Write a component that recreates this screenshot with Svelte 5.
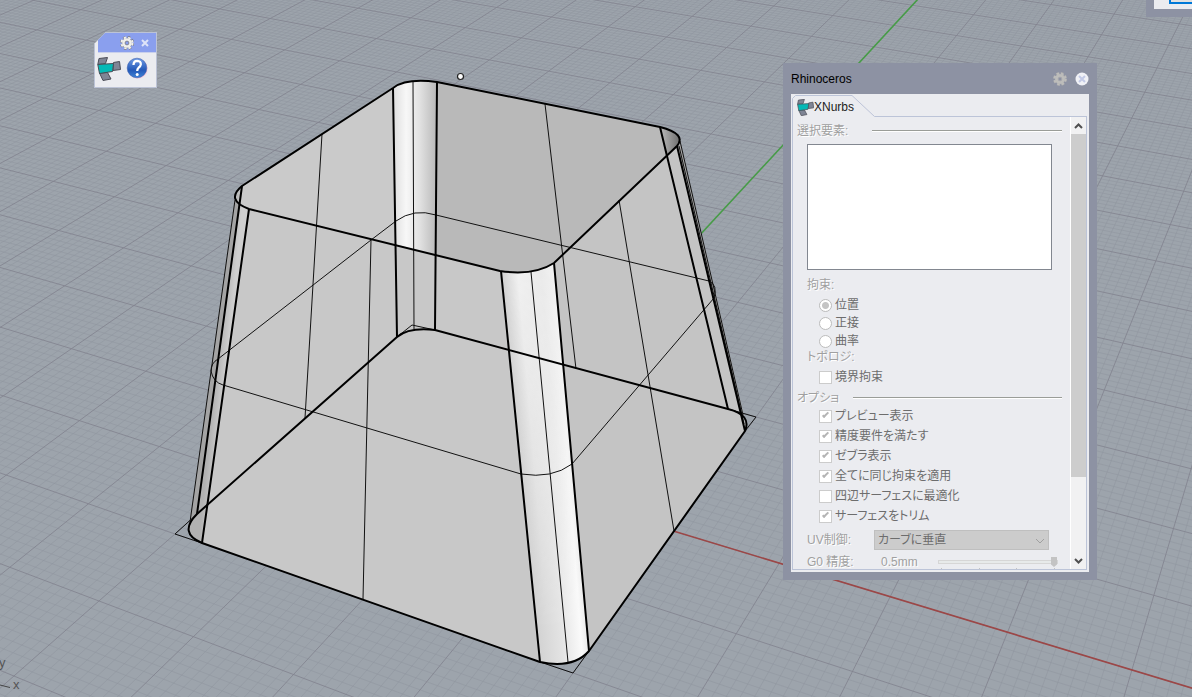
<script lang="ts">
  type Point = [number, number];

  interface Option {
    label: string;
    checked: boolean;
  }

  let constraint: string = $state("位置");
  const constraints: string[] = ["位置", "正接", "曲率"];

  let boundary: boolean = $state(false);

  let options: Option[] = $state([
    { label: "プレビュー表示", checked: true },
    { label: "精度要件を満たす", checked: true },
    { label: "ゼブラ表示", checked: true },
    { label: "全てに同じ拘束を適用", checked: true },
    { label: "四辺サーフェスに最適化", checked: false },
    { label: "サーフェスをトリム", checked: true },
  ]);

  let precision: number = $state(100);

  // Project a point of the construction plane to the viewport
  function project(u: number, v: number): Point {
    const w = 1 - 0.10677 * u + 0.21377 * v;
    return [
      (336.82 * u + 325.07 * v + 175) / w,
      (67.14 * u - 139.52 * v + 534) / w,
    ];
  }

  function segment(a: Point, b: Point) {
    return `M${a[0].toFixed(1)} ${a[1].toFixed(1)}L${b[0].toFixed(1)} ${b[1].toFixed(1)}`;
  }

  // Grid lines, ten minor steps for each major one
  function gridPath(major: boolean) {
    let d = "";
    for (let i = -120; i <= 100; i++) {
      if ((i % 10 === 0) === major) d += segment(project(i / 40, -1), project(i / 40, 5));
    }
    for (let i = -40; i <= 200; i++) {
      if ((i % 10 === 0) === major) d += segment(project(-3, i / 40), project(2.5, i / 40));
    }
    return d;
  }

  const minorGrid = gridPath(false);
  const majorGrid = gridPath(true);
  const xAxis = segment(project(0.5, 0.5), project(2.5, 0.5));
  const yAxis = segment(project(0.5, 0.5), project(0.5, 5));
</script>

{#snippet surfaceIcon(size: number)}
  <svg width={size} height={size} viewBox="0 0 24 24" aria-hidden="true">
    <g stroke="#4b4d57" stroke-width="1">
      <path d="M2 1.500L10.500 .5L8.500 6.500L.8 7.500Z" fill="#7f8595" />
      <path d="M2.500 16L10.500 15.500L14 22L6 23.500Z" fill="#7f8595" />
      <path d="M16.500 5.500L22.500 4.500L23.500 12.500L16 13.500Z" fill="#7f8595" />
      <path d="M.8 7.500L16.500 6.500L15.500 14.500L2.500 16.500Z" fill="#05b9b6" />
    </g>
  </svg>
{/snippet}

{#snippet gearIcon(body: string, hole: string, edge: string)}
  <svg width="14" height="14" viewBox="0 0 14 14" aria-hidden="true">
    <circle cx="7" cy="7" r="5.600" fill="none" stroke={edge} stroke-width="2.800" stroke-dasharray="2.500 1.900" />
    <circle cx="7" cy="7" r="5.200" fill={edge} />
    <circle cx="7" cy="7" r="5.500" fill="none" stroke={body} stroke-width="2" stroke-dasharray="2.500 1.900" />
    <circle cx="7" cy="7" r="4.800" fill={body} />
    <circle cx="7" cy="7" r="1.900" fill={hole} stroke={edge} stroke-width=".8" />
  </svg>
{/snippet}

<main class="workspace">
  <!-- Perspective viewport -->
  <svg class="viewport" viewBox="0 0 1192 697" preserveAspectRatio="xMinYMin slice" role="img" aria-label="Perspective">
    <defs>
      <linearGradient id="backCorner">
        <stop offset="0" stop-color="#dedede" />
        <stop offset=".3" stop-color="#f7f7f7" />
        <stop offset=".6" stop-color="#e2e2e2" />
        <stop offset="1" stop-color="#b8b8b8" />
      </linearGradient>
      <linearGradient id="frontCorner" gradientUnits="userSpaceOnUse" x1="500" y1="271" x2="558" y2="266">
        <stop offset="0" stop-color="#cfcfcf" />
        <stop offset=".3" stop-color="#f2f2f2" />
        <stop offset=".7" stop-color="#ebebeb" />
        <stop offset="1" stop-color="#f3f3f3" />
      </linearGradient>
      <linearGradient id="frontCornerLow" gradientUnits="userSpaceOnUse" x1="532" y1="600" x2="586" y2="596">
        <stop offset="0" stop-color="#d0d0d0" />
        <stop offset=".5" stop-color="#e4e4e4" />
        <stop offset=".85" stop-color="#fafafa" />
        <stop offset="1" stop-color="#e6e6e6" />
      </linearGradient>
      <linearGradient id="fade" x1="0" y1="0" x2="0" y2="1">
        <stop offset="0" stop-color="#000" />
        <stop offset=".9" stop-color="#fff" />
      </linearGradient>
      <mask id="lowMask">
        <rect x="480" y="260" width="130" height="410" fill="url(#fade)" />
      </mask>
      <linearGradient id="rightCorner">
        <stop offset="0" stop-color="#bcbcbc" />
        <stop offset="1" stop-color="#6f6f6f" />
      </linearGradient>
      <linearGradient id="leftInner">
        <stop offset="0" stop-color="#b5b5b5" />
        <stop offset="1" stop-color="#cacaca" />
      </linearGradient>
      <linearGradient id="leftCorner" gradientUnits="userSpaceOnUse" x1="217" y1="360" x2="227" y2="361">
        <stop offset="0" stop-color="#b2b2b2" />
        <stop offset="1" stop-color="#cfcfcf" />
      </linearGradient>
    </defs>

    <path class="minor" d={minorGrid} />
    <path class="major" d={majorGrid} />
    <path class="x-axis" d={xAxis} />
    <path class="y-axis" d={yAxis} />

    <!-- Shaded walls -->
    <path fill="#cacaca" d="M242 186L393 87L397 246L249 209Q230 200 242 186Z" />
    <path fill="#b9b9b9" d="M436 82L660 127L666 157L554 263Q532 276 500 271L436 255Z" />
    <path fill="url(#backCorner)" d="M393 87Q410 78 437 82L436 256L396 246Z" />
    <path fill="url(#rightCorner)" d="M660 127Q685 135 678 146L666 157Z" />
    <path fill="url(#leftInner)" d="M242 186Q230 199 241 206Z" />
    <path fill="#c8c8c8" d="M249 209L500 271L540 662L202 543Z" />
    <path fill="#c4c4c4" d="M554 263L677 146L745 431L589 651Z" />
    <path fill="#a4a4a4" d="M235 198Q236 203 240 205L197 514L190 520Z" />
    <path fill="url(#leftCorner)" d="M240 205L249 209L202 543Q188 537 188 528Q189 520 197 514Z" />
    <path fill="#a9a9a9" d="M677 146L680 141L744 416Q749 422 745 431Z" />
    <path fill="url(#frontCorner)" d="M500 271Q535 276 554 263L589 651Q575 669 540 662Z" />
    <path fill="url(#frontCornerLow)" mask="url(#lowMask)" d="M500 271Q535 276 554 263L589 651Q575 669 540 662Z" />

    <!-- Isocurves and silhouettes -->
    <g class="thin">
      <path d="M322 134L305 418M371 240L363 599M545 104L576 369M619 200L674 531" />
      <path d="M413 81L414 329M531 272L568 662" />
      <path d="M235 200L190 522M680 141L743 415M679 146L744 424" />
      <path d="M371 240L218 359Q211 363 211 371Q213 382 223 385L521 474Q552 479 572 464L714 298Q718 285 709 281L436 215Q414 208 396 221Z" />
      <path d="M197 514L175 534L202 543M540 662L573 673L589 651M728 409L756 417L745 431M397 337L412 325L435 330" />
    </g>

    <!-- Edges -->
    <g class="edge">
      <path d="M242 186L393 88Q406 78 437 82L660 127Q687 134 677 146L554 263Q534 276 500 271L249 209Q225 200 242 186Z" />
      <path d="M197 514L397 337Q409 327 435 330L728 409Q752 415 745 431L589 651Q573 669 540 662L202 543Q178 533 197 514Z" />
      <path d="M242 186L197 514M249 209L202 543M393 88L397 337M437 82L435 330" />
      <path d="M660 127L728 409M677 146L745 431M501 271L540 662M554 263L589 651" />
    </g>

    <circle cx="460.500" cy="76.500" r="3" fill="#fff" stroke="#222" stroke-width="1.200" />

    <!-- World axes icon -->
    <path d="M0 685L10 687.500" stroke="#444" fill="none" />
    <text x="-1" y="667">y</text>
    <text x="13" y="689">x</text>
  </svg>

  <!-- Floating toolbar -->
  <section class="toolbar" aria-label="XNurbs">
    <div class="toolbar-head">
      <button aria-label="Settings">{@render gearIcon("#efefec", "#8a9fee", "#77777c")}</button>
      <button aria-label="Close">
        <svg width="8" height="8" viewBox="0 0 8 8"><path d="M1 1L7 7M7 1L1 7" stroke="#dfe4f8" stroke-width="2" /></svg>
      </button>
    </div>
    <div class="toolbar-body">
      <button aria-label="XNurbs">{@render surfaceIcon(24)}</button>
      <button aria-label="Help">
        <svg width="22" height="22" viewBox="0 0 22 22">
          <defs>
            <linearGradient id="help" x1="0" y1="0" x2="0" y2="1">
              <stop offset="0" stop-color="#6e9be6" />
              <stop offset=".6" stop-color="#2459b8" />
              <stop offset="1" stop-color="#3f83d6" />
            </linearGradient>
          </defs>
          <circle cx="11.800" cy="11.800" r="10" fill="#f6cfe0" />
          <circle cx="11" cy="11" r="9.800" fill="url(#help)" stroke="#3a5fae" stroke-width=".6" />
          <path d="M7.500 8Q7.600 3.800 11.200 3.800Q15 4 14.800 7.400Q14.500 9.500 12.500 10.800Q11.200 11.800 11.200 14" fill="none" stroke="#fff" stroke-width="2.300" />
          <circle cx="11.200" cy="17.500" r="1.500" fill="#fff" />
        </svg>
      </button>
    </div>
  </section>

  <!-- Window docked in the corner -->
  <div class="docked"><div class="docked-body"><div class="docked-item"></div></div></div>

  <!-- XNurbs panel -->
  <section class="panel">
    <header>
      <h1>Rhinoceros</h1>
      <button aria-label="Settings">{@render gearIcon("#bdbdbb", "#8d92a3", "#aaaaad")}</button>
      <button aria-label="Close">
        <svg width="14" height="14" viewBox="0 0 14 14">
          <circle cx="7" cy="7" r="6.500" fill="#f0f1f6" />
          <path d="M4 4L10 10M10 4L4 10" stroke="#c3cae6" stroke-width="2" />
        </svg>
      </button>
    </header>

    <div class="panel-body">
      <div class="tabs">
        <svg class="tab-line" height="22" width="84" viewBox="0 0 84 22" aria-hidden="true">
          <path d="M.5 22V3.500L3.500 .5H60L82.500 21.500H84" fill="none" stroke="#bcc4d8" />
        </svg>
        <button class="tab">{@render surfaceIcon(17)}<span>XNurbs</span></button>
      </div>

      <div class="page">
        <form>
          <div class="heading"><label class="static selection" for="items">選択要素:</label><hr /></div>
          <select id="items" class="items" multiple disabled></select>

          <div class="static caption">拘束:</div>
          {#each constraints as name}
            <label class="choice">
              <input type="radio" name="constraint" value={name} bind:group={constraint} disabled />
              {name}
            </label>
          {/each}

          <div class="static topology">トポロジ:</div>
          <label class="choice boundary">
            <input type="checkbox" bind:checked={boundary} disabled />
            境界拘束
          </label>

          <div class="heading options"><span class="static">オプショ</span><hr /></div>
          {#each options as option}
            <label class="choice option">
              <input type="checkbox" bind:checked={option.checked} disabled />
              {option.label}
            </label>
          {/each}

          <div class="field">
            <label class="static" for="uv">UV制御:</label>
            <div class="dropdown">
              <select id="uv" disabled><option>カーブに垂直</option></select>
              <svg width="10" height="6" viewBox="0 0 10 6" aria-hidden="true"><path d="M1 1L5 5L9 1" fill="none" stroke="#a0a0a0" /></svg>
            </div>
          </div>
          <div class="field precision">
            <label class="static" for="g0">G0 精度:</label>
            <output class="static" for="g0">0.5mm</output>
            <div class="slider">
              <input id="g0" type="range" bind:value={precision} disabled />
              <div class="ticks"><i></i><i></i><i></i><i></i></div>
            </div>
          </div>
        </form>

        <div class="scrollbar">
          <button aria-label="Scroll up"><svg width="9" height="6" viewBox="0 0 9 6"><path d="M1 5L4.500 1.500L8 5" /></svg></button>
          <div class="track"><div class="thumb"></div></div>
          <button aria-label="Scroll down"><svg width="9" height="6" viewBox="0 0 9 6"><path d="M1 1L4.500 4.500L8 1" /></svg></button>
        </div>
      </div>
    </div>
  </section>
</main>

<style>
  .workspace {
    position: relative;
    height: 100vh;
    overflow: hidden;
    background-color: #9da4ac;
    color: #000;
    font-family: "Liberation Sans", "Noto Sans CJK JP", sans-serif;
    font-size: 12px;
    line-height: 14px;
  }

  button {
    display: flex;
    align-items: center;
    justify-content: center;
    margin: 0;
    padding: 0;
    border: 0;
    background: none;
    color: inherit;
    font: inherit;
  }

  /* Viewport */
  .viewport {
    display: block;
    width: 100%;
    height: 100%;
  }

  .viewport text {
    fill: #555;
    font-size: 13px;
  }

  .minor,
  .major,
  .x-axis,
  .y-axis {
    fill: none;
  }

  .minor {
    stroke: #8e959e;
    stroke-width: 0.8;
    opacity: 0.65;
  }

  .major {
    stroke: #83848f;
    stroke-width: 1;
    opacity: 0.85;
  }

  .x-axis {
    stroke: #9c4747;
    stroke-width: 1.6;
  }

  .y-axis {
    stroke: #479c47;
    stroke-width: 1.6;
  }

  .thin {
    fill: none;
    stroke: #111;
    stroke-width: 1;
  }

  .edge {
    fill: none;
    stroke: #000;
    stroke-width: 2;
    stroke-linejoin: round;
  }

  /* Floating toolbar */
  .toolbar {
    position: absolute;
    left: 94px;
    top: 32px;
    width: 63px;
    box-sizing: border-box;
    border: 1px solid #bcc3d6;
    background: #ebecf0;
    clip-path: polygon(12px 0, 100% 0, 100% 100%, 0 100%, 0 12px);
  }

  .toolbar-head {
    display: flex;
    align-items: center;
    justify-content: flex-end;
    gap: 7px;
    height: 19px;
    margin-left: 3px;
    padding-right: 7px;
    border-bottom: 1px solid #c9d0ec;
    background: #8a9fee;
  }

  .toolbar-body {
    display: flex;
    align-items: flex-start;
    gap: 5px;
    height: 34px;
    padding-left: 2px;
  }

  .toolbar-body button {
    padding-top: 4px;
  }

  /* Docked window */
  .docked {
    position: absolute;
    top: 0;
    right: 0;
    padding: 0 0 8px 8px;
    background: #8d92a3;
  }

  .docked-body {
    padding: 0 0 5px 15px;
    background: #ebecf0;
  }

  .docked-item {
    width: 21px;
    height: 2px;
    border: solid #0078d7;
    border-width: 0 0 2px 2px;
    background: #e1e1e1;
  }

  /* Panel */
  .panel {
    position: absolute;
    top: 63px;
    right: 95px;
    width: 314px;
    box-sizing: border-box;
    padding: 0 8px 8px;
    background: #8d92a3;
  }

  header {
    display: flex;
    align-items: center;
    gap: 8px;
    height: 31px;
  }

  h1 {
    flex: 1;
    margin: 0;
    font-size: 12px;
    font-weight: normal;
  }

  .panel-body {
    padding: 1px 2px 2px 1px;
    background: #ebecf0;
  }

  .tabs {
    position: relative;
    height: 22px;
    background: linear-gradient(#bcc4d8, #bcc4d8) right bottom / calc(100% - 83px) 1px no-repeat;
  }

  .tab-line {
    position: absolute;
    left: 0;
    top: 0;
  }

  .tab {
    position: relative;
    height: 24px;
    padding-left: 5px;
    color: #222;
  }

  .page {
    display: flex;
    height: 452px;
    border: 1px solid #bcc4d8;
    border-top: 0;
    overflow: hidden;
  }

  form {
    flex: 1;
    height: 453px;
    box-sizing: border-box;
    padding: 1px 8px 0 4px;
    font-feature-settings: "palt";
  }

  .static {
    color: #a0a0a0;
    text-shadow: 1px 1px 0 #fff;
  }

  .heading {
    display: flex;
    align-items: center;
    gap: 14px;
    height: 26px;
  }

  .selection {
    flex: 0 0 61px;
  }

  .heading.options {
    height: 16px;
  }

  hr {
    flex: 1;
    margin: 0;
    border: 0;
    border-top: 1px solid #9a9d98;
    border-bottom: 1px solid #fff;
  }

  .items {
    display: block;
    width: calc(100% - 20px);
    height: 126px;
    margin-left: 10px;
    border: 1px solid #828790;
    border-radius: 0;
    background: #fff;
    opacity: 1;
  }

  .caption {
    height: 22px;
    padding: 4px 0 0 10px;
    line-height: 22px;
  }

  .topology {
    padding-left: 10px;
  }

  .choice {
    display: flex;
    align-items: center;
    gap: 3px;
    height: 18px;
    padding-left: 22px;
    color: #6d6d6d;
  }

  .boundary {
    height: 26px;
  }

  .option {
    height: 20px;
  }

  .choice input {
    appearance: none;
    width: 13px;
    height: 13px;
    box-sizing: border-box;
    margin: 0;
    border: 1px solid #cccccc;
    background: #fff;
  }

  .choice input[type="radio"] {
    border-radius: 50%;
    border-color: #bcbcbc;
  }

  .choice input[type="radio"]:checked {
    background: radial-gradient(circle, #c4c4c4 0 3px, #fff 4px);
  }

  .choice input[type="checkbox"]:checked {
    display: flex;
    align-items: center;
    justify-content: center;
  }

  .choice input[type="checkbox"]:checked::before {
    content: "";
    width: 7px;
    height: 3px;
    margin-bottom: 3px;
    border: solid #b5b5b5;
    border-width: 0 0 2px 2px;
    box-sizing: border-box;
    transform: rotate(-45deg);
  }

  .field {
    display: flex;
    align-items: center;
    height: 28px;
    padding-left: 10px;
  }

  .field label {
    flex: 0 0 67px;
  }

  .dropdown {
    position: relative;
    width: 175px;
  }

  .dropdown svg {
    position: absolute;
    right: 4px;
    top: 8px;
  }

  .dropdown select {
    display: block;
    appearance: none;
    width: 100%;
    height: 20px;
    padding: 0 3px;
    border: 1px solid #bfbfbf;
    border-radius: 0;
    background: #cccccc;
    color: #6d6d6d;
    font: inherit;
    opacity: 1;
  }

  .field.precision {
    height: 15px;
  }

  .precision label {
    flex-basis: 74px;
  }

  .precision output {
    flex: 0 0 57px;
  }

  .slider {
    display: flex;
    flex-direction: column;
    flex: 1;
    margin-right: 4px;
    padding-top: 3px;
  }

  .slider input {
    appearance: none;
    width: 100%;
    height: 11px;
    margin: 0;
    background: linear-gradient(#d6d6d6, #d6d6d6) center / 100% 4px no-repeat;
  }

  .slider input::-webkit-slider-runnable-track {
    height: 2px;
    margin: 0 1px;
    background: #e7eaea;
  }

  .slider input::-webkit-slider-thumb {
    appearance: none;
    width: 6px;
    height: 10px;
    margin-top: -4px;
    background: #c3c3c3;
    clip-path: polygon(0 0, 100% 0, 100% 75%, 50% 100%, 0 75%);
  }

  .ticks {
    display: flex;
    justify-content: space-between;
    padding: 0 3px;
  }

  .ticks i {
    width: 1px;
    height: 2px;
    background: #c4c4c4;
  }

  /* Scrollbar */
  .scrollbar {
    display: flex;
    flex-direction: column;
    width: 16px;
    background: #f1f1f2;
    border-left: 1px solid #fff;
    box-sizing: border-box;
  }

  .scrollbar button {
    height: 17px;
  }

  .scrollbar path {
    fill: none;
    stroke: #505050;
    stroke-width: 2;
  }

  .track {
    flex: 1;
  }

  .thumb {
    height: 82%;
    background: #cdcdcd;
  }
</style>
